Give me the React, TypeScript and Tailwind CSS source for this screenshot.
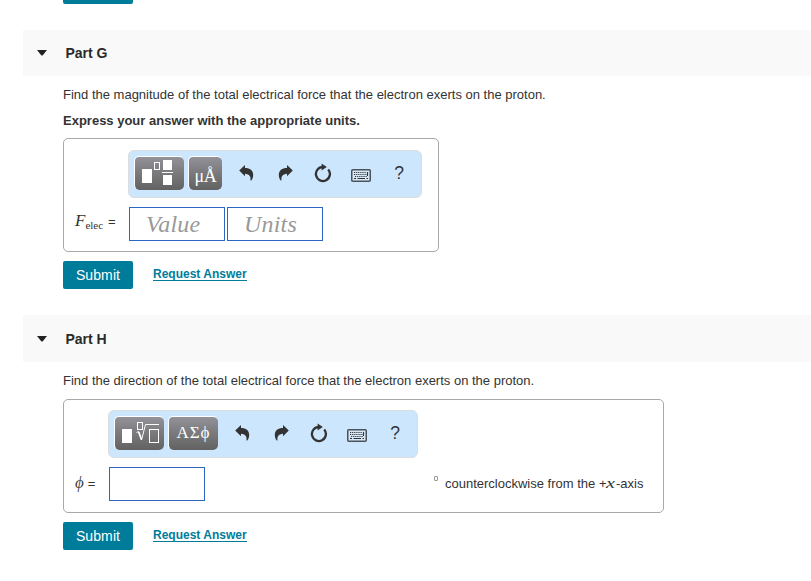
import React from 'react';

const UndoIcon = ({ flip = false }: { flip?: boolean }) => (
  <svg width="16" height="18" viewBox="0 0 16 18" className={flip ? '-scale-x-100' : ''}>
    <path d="M0.2 6.4 L6 1 V3.9 C11 3.9 14.2 6.4 14.2 10.8 C14.2 13.2 13.5 15.2 12.2 16.6 H11.4 C12.2 12.8 10.6 10 6 9.7 V12.2 Z" fill="#333" />
  </svg>
);

const ResetIcon = () => (
  <svg width="18" height="20" viewBox="0 0 18 20">
    <path d="M9 4 A7 7 0 1 0 14.2 6.4" fill="none" stroke="#333" strokeWidth="2.3" />
    <path d="M7.6 0.6 L12.8 4 L7.6 7.4 Z" fill="#333" />
  </svg>
);

const KeyboardIcon = () => (
  <svg width="20" height="13" viewBox="0 0 20 13">
    <rect x="0.75" y="0.75" width="18.5" height="11.5" rx="1" fill="#d6e8f8" stroke="#4a525a" strokeWidth="1.5" />
    <path d="M3 3.5 H15 M3 5.5 H16 M4 7.5 H16" stroke="#333" strokeWidth="1.1" strokeDasharray="1.2 0.9" />
    <path d="M16.5 3 V7 M3 9.5 H5 M6.5 9.5 H14 M15.5 9.5 H17" stroke="#333" strokeWidth="1.1" />
  </svg>
);

const FractionIcon = () => (
  <svg width="49" height="33" viewBox="0 0 49 33">
    <rect x="7" y="12" width="10" height="14" fill="#fff" />
    <rect x="19.5" y="5.5" width="5" height="7" fill="none" stroke="#fff" />
    <rect x="28" y="3" width="9" height="10" fill="#fff" />
    <path d="M27 15.5 H38" stroke="#fff" />
    <rect x="28" y="18" width="9" height="10" fill="#fff" />
  </svg>
);

const RootIcon = () => (
  <svg width="49" height="33" viewBox="0 0 49 33">
    <rect x="7" y="12" width="10" height="14" fill="#fff" />
    <rect x="22.5" y="5.5" width="5" height="7" fill="none" stroke="#fff" />
    <path d="M21.5 15.5 L23.5 14.5 L26.5 23 L30.5 7.5 H44" fill="none" stroke="#fff" />
    <path d="M23.7 15 L26.5 22.5" stroke="#fff" strokeWidth="1.7" />
    <rect x="34.5" y="12.5" width="9" height="13" fill="none" stroke="#fff" />
  </svg>
);

const PaletteButton = ({ className, children }: { className: string; children: React.ReactNode }) => (
  <button className={`h-[34px] rounded-[5px] border-t border-l border-white bg-linear-to-b from-[#929298] to-[#626262] flex items-center justify-center font-['Liberation_Serif',serif] text-white ${className}`}>
    {children}
  </button>
);

const Toolbar = ({ className, children }: { className: string; children: React.ReactNode }) => (
  <div className={`h-12 rounded-[6px] border border-[#dcdcdc] bg-[#cce6fd] pl-[5px] flex items-center gap-1 ${className}`}>
    <div className="flex gap-1 -mt-[2px]">{children}</div>
    <div className="flex items-center ml-[2px] -mt-[1px] h-6">
      <span className="w-[38px] flex justify-center -mt-[2px]"><UndoIcon /></span>
      <span className="w-[38px] flex justify-center -mt-[2px]"><UndoIcon flip /></span>
      <span className="w-[38px] flex justify-center -mt-[2px]"><ResetIcon /></span>
      <span className="w-[38px] flex justify-center mt-[3px]"><KeyboardIcon /></span>
      <span className="w-[38px] -mt-[1px] text-center text-[17.5px] leading-6 text-[#333] font-['Liberation_Sans',Arial,sans-serif]">?</span>
    </div>
  </div>
);

const PartHeader = ({ title }: { title: string }) => (
  <div className="ml-[23px] bg-[#f9f9f9] flex items-center h-full">
    <svg width="10" height="6" viewBox="0 0 10 6" className="ml-[14px]">
      <path d="M0 0 H10 L6 5 Q5 6 4 5 Z" fill="#222" />
    </svg>
    <h2 className="ml-[18.5px] text-sm leading-5 font-bold text-[#292929]">{title}</h2>
  </div>
);

const Actions = () => (
  <div className="flex h-7">
    <button className="w-[70px] h-7 rounded-[2px] bg-[#007c9b] text-white text-[14px] tracking-[0.1px]">Submit</button>
    <div className="ml-[20px] pt-[5px]">
      <a className="block h-[15px] border-b border-[#007c9b] text-[12px] leading-[17px] font-bold text-[#007c9b]">Request Answer</a>
    </div>
  </div>
);

export default function App() {
  return (
    <div className="w-[811px] h-[581px] bg-white overflow-hidden font-['Liberation_Sans',Arial,sans-serif] text-[13px] leading-5 text-[#333]">
      <div className="ml-[63px] w-[70px] h-1 rounded-b-[2px] bg-[#007c9b]" />

      <section className="mt-[26px]">
        <div className="h-[46px]"><PartHeader title="Part G" /></div>
        <div className="pl-[63px] pt-[9px]">
          <p>Find the magnitude of the total electrical force that the electron exerts on the proton.</p>
          <p className="mt-[6px] font-bold">Express your answer with the appropriate units.</p>
          <div className="mt-[7px] w-[376px] h-[114px] rounded-[5px] border border-[#a9a9a9] pt-[11px] pl-[11px]">
            <Toolbar className="ml-[53px] w-[294px]">
              <PaletteButton className="w-[50px]"><FractionIcon /></PaletteButton>
              <PaletteButton className="w-[34px] text-[18px] -tracking-[0.2px] pt-[4px]">μÅ</PaletteButton>
            </Toolbar>
            <div className="mt-[9px] flex h-[34px]">
              <div className="w-[54px] flex items-baseline font-['Liberation_Serif',serif] whitespace-nowrap pt-[4px]">
                <span className="text-[17px] italic">F</span>
                <span className="text-[11px] relative top-[3px]">elec</span>
                <span className="ml-[5px] text-[13px] font-['Liberation_Sans',sans-serif]">=</span>
              </div>
              <div className="w-24 h-[34px] border border-[#2b66c3] pl-4 font-['Liberation_Serif',serif] italic text-[24px] tracking-[0.2px] leading-[33px] text-[#999]">Value</div>
              <div className="ml-[2px] w-24 h-[34px] border border-[#2b66c3] pl-4 font-['Liberation_Serif',serif] italic text-[24px] tracking-[0.2px] leading-[33px] text-[#999]">Units</div>
            </div>
          </div>
          <div className="mt-[9px]"><Actions /></div>
        </div>
      </section>

      <section className="mt-[26px]">
        <div className="h-[47px]"><PartHeader title="Part H" /></div>
        <div className="pl-[63px] pt-[9px]">
          <p>Find the direction of the total electrical force that the electron exerts on the proton.</p>
          <div className="mt-[8px] w-[601px] h-[114px] rounded-[5px] border border-[#a9a9a9] pt-[10px] pl-[11px]">
            <Toolbar className="ml-[33px] w-[310px]">
              <PaletteButton className="w-[50px]"><RootIcon /></PaletteButton>
              <PaletteButton className="w-[50px] text-[17px] tracking-[0.9px] pb-[2px]">ΑΣϕ</PaletteButton>
            </Toolbar>
            <div className="mt-[9px] flex h-[34px]">
              <div className="w-[34px] flex items-baseline pt-[6px]">
                <span className="font-['Liberation_Serif',serif] italic text-[17px] text-[#444]">ϕ</span>
                <span className="ml-[4px]">=</span>
              </div>
              <div className="w-24 h-[34px] border border-[#2b66c3]" />
              <div className="ml-[228px] flex pt-[7px] whitespace-nowrap">
                <span className="mt-[2px] ml-[1px] w-[4px] h-[5px] rounded-[1px] border border-[#999]" />
                <span className="ml-[7px]">counterclockwise from the +<i className="inline-block w-[9.5px] font-['Liberation_Serif',serif] text-[15px] leading-none origin-left scale-x-135">x</i>-axis</span>
              </div>
            </div>
          </div>
          <div className="mt-[9px]"><Actions /></div>
        </div>
      </section>
    </div>
  );
}
